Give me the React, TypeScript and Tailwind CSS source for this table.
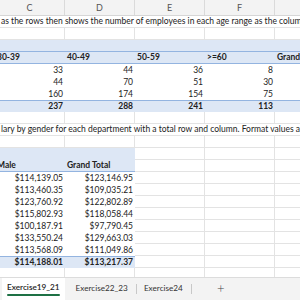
import React from 'react';

type Cell = { text?: string; align?: 'left' | 'right' };

const FONT = "font-['Lato','Liberation_Sans',sans-serif]";

const colClass = 'w-[70px] shrink-0 overflow-visible whitespace-nowrap px-[2px]';

function GridRow({ cells = [], bold = false, tone = 'grid', text }: { cells?: Cell[]; bold?: boolean; tone?: 'grid' | 'plain' | 'pivotHead' | 'pivotData' | 'pivotTotal'; text?: string }) {
  const rowTone = {
    grid: '',
    plain: 'border-b border-[#e3e3e3]',
    pivotHead: 'bg-[#dde7f5] border-b border-[#93b4e0]',
    pivotData: 'bg-white',
    pivotTotal: 'bg-[#dde7f5] border-t border-[#93b4e0]',
  }[tone];
  if (text) {
    return (
      <div className={`flex h-[12px] items-end whitespace-nowrap border-b border-[#e3e3e3] pl-[1px] text-[8.5px] leading-[11px] text-[#222] ${rowTone}`}>
        {text}
      </div>
    );
  }
  return (
    <div className={`-ml-[5px] flex h-[12px] text-[8.5px] leading-[11px] text-[#222] ${bold ? 'font-bold' : ''} ${rowTone}`}>
      {Array.from({ length: 5 }).map((_, i) => {
        const c = cells[i] ?? {};
        return (
          <div
            key={i}
            className={`${colClass} flex items-end ${c.align === 'right' ? 'justify-end' : 'justify-start'} ${tone === 'grid' ? 'border-b border-r border-[#e3e3e3]' : ''}`}
          >
            {c.text}
          </div>
        );
      })}
    </div>
  );
}

// lower pivot only covers the first two visible columns; the rest is plain grid
function SplitRow({ cells = [], kind }: { cells?: Cell[]; kind: 'head' | 'top' | 'data' | 'total' }) {
  const pivot = {
    top: 'bg-[#dde7f5]',
    head: 'bg-[#dde7f5] border-b border-[#93b4e0] font-bold',
    data: 'bg-white',
    total: 'bg-[#dde7f5] border-t border-[#93b4e0] font-bold',
  }[kind];
  return (
    <div className="-ml-[5px] flex h-[12px] text-[8.5px] leading-[11px] text-[#222]">
      <div className={`flex w-[140px] shrink-0 ${pivot}`}>
        {[0, 1].map((i) => (
          <div key={i} className={`${colClass} flex items-end ${cells[i]?.align === 'right' ? 'justify-end' : 'justify-start'}`}>
            {cells[i]?.text}
          </div>
        ))}
      </div>
      {[0, 1, 2].map((i) => (
        <div key={i} className="w-[70px] shrink-0 border-b border-r border-[#e3e3e3]" />
      ))}
    </div>
  );
}

const r = (t: string): Cell => ({ text: t, align: 'right' });
const l = (t: string): Cell => ({ text: t, align: 'left' });

const ageData = [
  ['33', '44', '36', '8', '121'],
  ['44', '70', '51', '30', '195'],
  ['160', '174', '154', '75', '563'],
];

const salary = [
  ['$114,139.05', '$123,146.95'],
  ['$113,460.35', '$109,035.21'],
  ['$123,760.92', '$122,802.89'],
  ['$115,802.93', '$118,058.44'],
  ['$100,187.91', '$97,790.45'],
  ['$133,550.24', '$129,663.03'],
  ['$113,568.09', '$111,049.86'],
];

export default function App() {
  return (
    <div className={`flex h-[300px] w-[300px] flex-col overflow-hidden bg-white ${FONT}`}>
      <div className="-ml-[5px] flex h-[16px] shrink-0 border-b border-[#d6d6d6] bg-[#f3f3f3] text-[9px] text-[#555]">
        {['C', 'D', 'E', 'F', 'G'].map((h) => (
          <div key={h} className="flex w-[70px] shrink-0 items-center justify-center border-r border-[#dadada]">
            {h}
          </div>
        ))}
      </div>

      <GridRow text="as the rows then shows the number of employees in each age range as the columns." />
      <GridRow />
      <GridRow tone="pivotHead" cells={[]} />
      <GridRow tone="pivotHead" bold cells={[l('30-39'), l('40-49'), l('50-59'), l('>=60'), l('Grand Total')]} />
      {ageData.map((row, i) => (
        <GridRow key={i} tone="pivotData" cells={row.map(r)} />
      ))}
      <GridRow tone="pivotTotal" bold cells={['237', '288', '241', '113', '879'].map(r)} />
      <GridRow />
      <GridRow text="lary by gender for each department with a total row and column. Format values as currency." />
      <GridRow />
      <SplitRow kind="top" />
      <SplitRow kind="head" cells={[l('Male'), l('Grand Total')]} />
      {salary.map((row, i) => (
        <SplitRow key={i} kind="data" cells={row.map(r)} />
      ))}
      <SplitRow kind="total" cells={[r('$114,188.01'), r('$113,217.37')]} />
      <div className="-ml-[5px] flex h-[9px] shrink-0">
        {[0, 1, 2, 3, 4].map((i) => (
          <div key={i} className="w-[70px] shrink-0 border-r border-[#e3e3e3]" />
        ))}
      </div>

      <div className="flex h-[23px] shrink-0 items-stretch border-t border-[#dcdcdc] bg-[#f3f3f3] text-[8.2px] text-[#333]">
        <div className="ml-[2px] flex flex-col items-center justify-center bg-white px-[5px]">
          <span className="font-semibold leading-[11px] text-[#1e1e1e]">Exercise19_21</span>
          <span className="mt-[1px] h-[2px] w-full rounded bg-[#1e7145]" />
        </div>
        <div className="flex items-center pl-[11px] pr-[8px] pb-[1px]">Exercise22_23</div>
        <div className="my-[6px] w-px bg-[#c8c8c8]" />
        <div className="flex items-center pl-[7px] pr-[8px] pb-[1px]">Exercise24</div>
        <div className="my-[6px] w-px bg-[#c8c8c8]" />
        <div className="flex items-center pl-[25px] text-[13px] font-light text-[#444]">+</div>
      </div>
    </div>
  );
}
